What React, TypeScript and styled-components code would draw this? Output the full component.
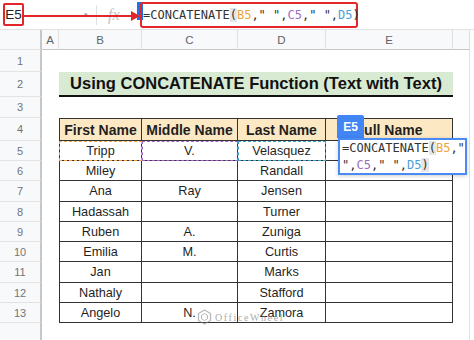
import styled, { createGlobalStyle } from 'styled-components';

const GlobalStyle = createGlobalStyle`
  body {
    margin: 0;
    background: #ffffff;
    font-family: 'Liberation Sans', Arial, sans-serif;
    overflow: hidden;
  }
`;

const COLS = '42px 17px 83px 96px 88px 127px 17px 4px';

const Page = styled.div`
  width: 474px;
  height: 340px;
  position: relative;
  overflow: hidden;
  background: #ffffff;
`;

const FormulaBar = styled.div`
  position: relative;
  height: 30px;
  box-sizing: border-box;
  display: flex;
  align-items: center;
  border-bottom: 1px solid #e1e1e1;
`;

const NameBox = styled.div`
  margin-left: 3px;
  width: 21px;
  height: 23px;
  box-sizing: border-box;
  border: 2px solid #e3262a;
  border-radius: 2px;
  display: flex;
  align-items: center;
  justify-content: center;
  font-size: 13.5px;
  color: #202124;
`;

const Caret = styled.span`
  margin-left: 60px;
  width: 6px;
  font-size: 7px;
  color: #9aa0a6;
`;

const Divider = styled.span`
  margin-left: 6px;
  width: 1px;
  height: 20px;
  background: #e0e0e0;
`;

const Fx = styled.span`
  margin-left: 11px;
  width: 16px;
  font-family: 'Liberation Serif', serif;
  font-style: italic;
  font-size: 16px;
  color: #c4c4c4;
`;

const Cursor = styled.span`
  margin-left: 13px;
  width: 6px;
  height: 18px;
  margin-top: -8px;
  background: #1a73e8;
  display: flex;
  justify-content: center;
  align-items: center;

  &::after {
    content: '';
    width: 1px;
    height: 12px;
    background: #ffffff;
  }
`;

const FormulaBox = styled.div`
  margin-left: -3px;
  width: 218px;
  height: 26px;
  box-sizing: border-box;
  border: 2px solid #e3262a;
  border-radius: 3px;
  display: flex;
  align-items: center;
  padding-left: 1px;
`;

const Mono = styled.span`
  font-family: 'DejaVu Sans Mono', 'Liberation Mono', monospace;
  font-size: 12px;
  color: #333333;
  white-space: pre;
`;

const Ref = styled.span<{ $c: string }>`
  color: ${p => p.$c};
`;

const Paren = styled.span`
  background: #e6e6e6;
`;

const Arrow = styled.svg`
  position: absolute;
  left: 0;
  top: 0;
`;

const Row = styled.div<{ $h: number }>`
  display: grid;
  grid-template-columns: ${COLS};
  height: ${p => p.$h}px;
`;

const RowHead = styled.div`
  background: #f8f9fa;
  border-right: 2px solid #c7c7c7;
  border-bottom: 1px solid #e3e3e3;
  box-sizing: border-box;
  display: flex;
  align-items: center;
  justify-content: center;
  font-size: 11px;
  color: #70757a;
`;

const ColHead = styled.div`
  background: #f8f9fa;
  border-right: 1px solid #e0e0e0;
  border-bottom: 1px solid #c7c7c7;
  box-sizing: border-box;
  display: flex;
  align-items: center;
  justify-content: center;
  font-size: 11.5px;
  color: #5f6368;
`;

const Blank = styled.div<{ $edge?: boolean }>`
  border-right: ${p => (p.$edge ? '1px solid #e3e3e3' : 'none')};
`;

const Title = styled.div`
  grid-column: 3 / 7;
  background: #d9ead3;
  border-bottom: 2.5px solid #111111;
  box-sizing: border-box;
  display: flex;
  align-items: center;
  justify-content: center;
  font-weight: bold;
  font-size: 16.5px;
  color: #111111;
`;

const Cell = styled.div<{ $head?: boolean; $first?: boolean; $dash?: string }>`
  position: relative;
  box-sizing: border-box;
  border-right: 1px solid #333333;
  border-bottom: 1px solid #333333;
  border-left: ${p => (p.$first ? '1px solid #333333' : 'none')};
  border-top: ${p => (p.$head ? '1px solid #333333' : 'none')};
  background: ${p => (p.$head ? '#fde8c4' : '#ffffff')};
  display: flex;
  align-items: center;
  justify-content: center;
  font-size: ${p => (p.$head ? '14px' : '12.7px')};
  font-weight: ${p => (p.$head ? 'bold' : 'normal')};
  color: #1f1f1f;
  outline: ${p => (p.$dash ? `1.5px dashed ${p.$dash}` : 'none')};
  outline-offset: -1.5px;
`;

const Chip = styled.div`
  position: absolute;
  left: 11px;
  top: -26px;
  width: 27px;
  height: 23px;
  background: #4285f4;
  border-radius: 2px 2px 0 0;
  color: #ffffff;
  font-weight: bold;
  font-size: 12px;
  display: flex;
  align-items: center;
  justify-content: center;
  z-index: 3;
`;

const Popup = styled.div`
  position: absolute;
  left: 12px;
  top: -3px;
  width: 129px;
  height: 37px;
  box-sizing: border-box;
  background: #ffffff;
  border: 2px solid #4a8af4;
  box-shadow: 0 1px 4px rgba(0, 0, 0, 0.2);
  padding: 0 2px;
  display: flex;
  flex-direction: column;
  line-height: 17px;
  z-index: 3;
`;

const Watermark = styled.div`
  position: absolute;
  left: 197px;
  top: 309px;
  display: flex;
  align-items: center;
  gap: 3px;
  font-family: 'Liberation Serif', serif;
  font-size: 10px;
  letter-spacing: 1.6px;
  color: rgba(140, 140, 140, 0.75);
`;

const people = [
  ['Tripp', 'V.', 'Velasquez'],
  ['Miley', '', 'Randall'],
  ['Ana', 'Ray', 'Jensen'],
  ['Hadassah', '', 'Turner'],
  ['Ruben', 'A.', 'Zuniga'],
  ['Emilia', 'M.', 'Curtis'],
  ['Jan', '', 'Marks'],
  ['Nathaly', '', 'Stafford'],
  ['Angelo', 'N.', 'Zamora'],
];

const heights = [20, 20, 21, 20, 20, 20, 21, 20, 20];

const Formula = () => (
  <Mono>
    =CONCATENATE<Paren>(</Paren>
    <Ref $c="#f0a33c">B5</Ref>,&quot; &quot;,<Ref $c="#9a6cc0">C5</Ref>,&quot; &quot;,
    <Ref $c="#4a9fd8">D5</Ref>)
  </Mono>
);

const App = () => {
  return (
    <Page>
      <GlobalStyle />
      <FormulaBar>
        <NameBox>E5</NameBox>
        <Caret>▾</Caret>
        <Divider />
        <Fx>fx</Fx>
        <Cursor />
        <FormulaBox>
          <Formula />
        </FormulaBox>
        <Arrow width="474" height="30">
          <line x1="24" y1="16" x2="133" y2="16" stroke="#e3262a" strokeWidth="2" />
          <polygon points="131,11 140,16 131,21" fill="#e3262a" />
        </Arrow>
      </FormulaBar>

      <Row $h={20}>
        <RowHead />
        {['A', 'B', 'C', 'D', 'E', ''].map(c => (
          <ColHead key={c}>{c}</ColHead>
        ))}
        <Blank />
      </Row>

      <Row $h={22}>
        <RowHead>1</RowHead>
        <Blank /><Blank /><Blank /><Blank /><Blank /><Blank $edge /><Blank />
      </Row>
      <Row $h={25}>
        <RowHead>2</RowHead>
        <Blank />
        <Title>Using CONCATENATE Function (Text with Text)</Title>
        <Blank $edge />
        <Blank />
      </Row>
      <Row $h={21}>
        <RowHead>3</RowHead>
        <Blank /><Blank /><Blank /><Blank /><Blank /><Blank $edge /><Blank />
      </Row>
      <Row $h={23}>
        <RowHead>4</RowHead>
        <Blank />
        <Cell $head $first>First Name</Cell>
        <Cell $head>Middle Name</Cell>
        <Cell $head>Last Name</Cell>
        <Cell $head>Full Name</Cell>
        <Blank $edge />
        <Blank />
      </Row>

      {people.map(([first, middle, last], i) => (
        <Row $h={heights[i]} key={first}>
          <RowHead>{i + 5}</RowHead>
          <Blank />
          <Cell $first $dash={i === 0 ? '#f3a53d' : undefined}>{first}</Cell>
          <Cell $dash={i === 0 ? '#a461cc' : undefined}>{middle}</Cell>
          <Cell $dash={i === 0 ? '#3aa3c9' : undefined}>{last}</Cell>
          <Cell>
            {i === 0 && (
              <>
                <Chip>E5</Chip>
                <Popup>
                  <Mono>
                    =CONCATENATE<Paren>(</Paren><Ref $c="#f0a33c">B5</Ref>,&quot;
                  </Mono>
                  <Mono>
                    &quot;,<Ref $c="#9a6cc0">C5</Ref>,&quot; &quot;,<Ref $c="#4a9fd8">D5</Ref><Paren>)</Paren>
                  </Mono>
                </Popup>
              </>
            )}
          </Cell>
          <Blank $edge />
          <Blank />
        </Row>
      ))}

      <Row $h={20}>
        <RowHead />
        <Blank /><Blank /><Blank /><Blank /><Blank /><Blank $edge /><Blank />
      </Row>

      <Watermark>
        <svg width="15" height="16" viewBox="0 0 15 16">
          <polygon points="7.5,1 13.5,4.5 13.5,11.5 7.5,15 1.5,11.5 1.5,4.5" fill="none" stroke="rgba(140,140,140,0.6)" strokeWidth="1.3" />
          <polygon points="7.5,4.5 10.5,6.3 10.5,9.7 7.5,11.5 4.5,9.7 4.5,6.3" fill="none" stroke="rgba(140,140,140,0.6)" strokeWidth="1" />
        </svg>
        <span>OfficeWheel</span>
      </Watermark>
    </Page>
  );
};

export default App;
